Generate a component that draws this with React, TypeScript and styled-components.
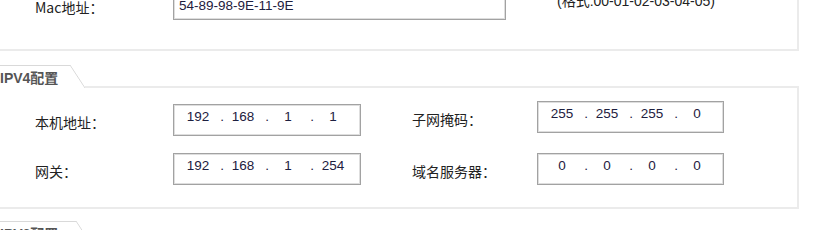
import React from 'react';
import styled, { createGlobalStyle } from 'styled-components';

const GlobalStyle = createGlobalStyle`
  html, body { margin: 0; padding: 0; background: #fff; overflow: hidden; }
  body { font-family: "Liberation Sans", "Noto Sans CJK SC", sans-serif; }
`;

const Page = styled.div`
  width: 819px;
  margin: -30px 0 0 -20px;
`;

const Panel = styled.section<{ $open?: boolean; $pad: string }>`
  box-sizing: border-box;
  border: 2px solid #ebebeb;
  ${(p) => (p.$open ? 'border-top: none;' : '')}
  padding: ${(p) => p.$pad};
  display: flex;
  flex-direction: column;
  gap: 17px;
  min-height: 40px;
`;

const TabHeader = styled.div<{ $gap: number }>`
  display: flex;
  height: 23px;
  margin-top: ${(p) => p.$gap}px;
`;

const Tab = styled.div<{ $width: number }>`
  box-sizing: border-box;
  width: ${(p) => p.$width}px;
  border-top: 1px solid #d9d9d9;
  border-left: 1px solid #d9d9d9;
  padding: 4px 0 0 19px;
  font-family: "Liberation Sans", "Noto Sans CJK SC", sans-serif;
  font-size: 14px;
  font-weight: bold;
  line-height: 16px;
  color: #555;
  white-space: nowrap;
`;

const TabSlant = styled.div`
  width: 15px;
  background: linear-gradient(
    to top right,
    transparent calc(50% - 0.8px),
    #d9d9d9 50%,
    transparent calc(50% + 0.8px)
  );
`;

const TabFiller = styled.div`
  flex: 1;
  border-bottom: 2px solid #ebebeb;
`;

const Row = styled.div<{ $height: number }>`
  display: flex;
  align-items: flex-start;
  height: ${(p) => p.$height}px;
`;

const Pair = styled.div<{ $left?: number; $shift?: number }>`
  display: flex;
  align-items: center;
  margin-left: ${(p) => p.$left ?? 0}px;
  margin-top: ${(p) => p.$shift ?? 0}px;
`;

const Label = styled.div<{ $width: number; $drop?: number }>`
  width: ${(p) => p.$width}px;
  padding-top: ${(p) => p.$drop ?? 4}px;
  font-family: "Noto Sans CJK SC", "Liberation Sans", sans-serif;
  font-size: 14px;
  line-height: 20px;
  color: #222;
  white-space: nowrap;
`;

const Field = styled.div<{ $width: number; $height?: number; $padTop?: number }>`
  box-sizing: border-box;
  display: flex;
  width: ${(p) => p.$width}px;
  height: ${(p) => p.$height ?? 32}px;
  border: 1px solid #a2a2a2;
  box-shadow: inset 0 0 0 1px #dedede;
  padding: ${(p) => p.$padTop ?? 4}px 0 0 5px;
  background: #fff;
  font-family: "Liberation Sans", sans-serif;
  font-size: 13.5px;
  line-height: 16px;
  color: #1d2040;
  white-space: nowrap;
`;

const Seg = styled.span`
  width: 38px;
  text-align: center;
`;

const Dot = styled.span`
  width: 7px;
  text-align: right;
`;

const Hint = styled.div`
  margin-left: 51px;
  font-family: "Liberation Sans", "Noto Sans CJK SC", sans-serif;
  font-size: 14px;
  line-height: 20px;
  color: #222;
  white-space: nowrap;
`;

const IpField: React.FC<{ value: string; width: number }> = ({ value, width }) => {
  const parts = value.split('.');
  return (
    <Field $width={width}>
      {parts.map((p, i) => (
        <React.Fragment key={i}>
          <Seg>{p}</Seg>
          {i < parts.length - 1 && <Dot>.</Dot>}
        </React.Fragment>
      ))}
    </Field>
  );
};

export default function App() {
  return (
    <>
      <GlobalStyle />
      <Page>
        <Panel $pad="14px 0 29px 53px">
          <Row $height={34}>
            <Pair>
              <Label $width={138} $drop={7}>Mac地址：</Label>
              <Field $width={333} $height={34} $padTop={11}>54-89-98-9E-11-9E</Field>
            </Pair>
            <Pair $shift={5}>
              <Hint>(格式:00-01-02-03-04-05)</Hint>
            </Pair>
          </Row>
        </Panel>

        <TabHeader $gap={14}>
          <Tab $width={90}>IPV4配置</Tab>
          <TabSlant />
          <TabFiller />
        </TabHeader>
        <Panel $open $pad="16px 0 22px 53px">
          <Row $height={32}>
            <Pair>
              <Label $width={138}>本机地址：</Label>
              <IpField width={188} value="192.168.1.1" />
            </Pair>
            <Pair $left={51} $shift={-3}>
              <Label $width={125}>子网掩码：</Label>
              <IpField width={187} value="255.255.255.0" />
            </Pair>
          </Row>
          <Row $height={32}>
            <Pair>
              <Label $width={138}>网关：</Label>
              <IpField width={188} value="192.168.1.254" />
            </Pair>
            <Pair $left={51}>
              <Label $width={125}>域名服务器：</Label>
              <IpField width={187} value="0.0.0.0" />
            </Pair>
          </Row>
        </Panel>

        <TabHeader $gap={12}>
          <Tab $width={96}>IPV6配置</Tab>
          <TabSlant />
          <TabFiller />
        </TabHeader>
        <Panel $open $pad="16px 0 22px 53px" />
      </Page>
    </>
  );
}
